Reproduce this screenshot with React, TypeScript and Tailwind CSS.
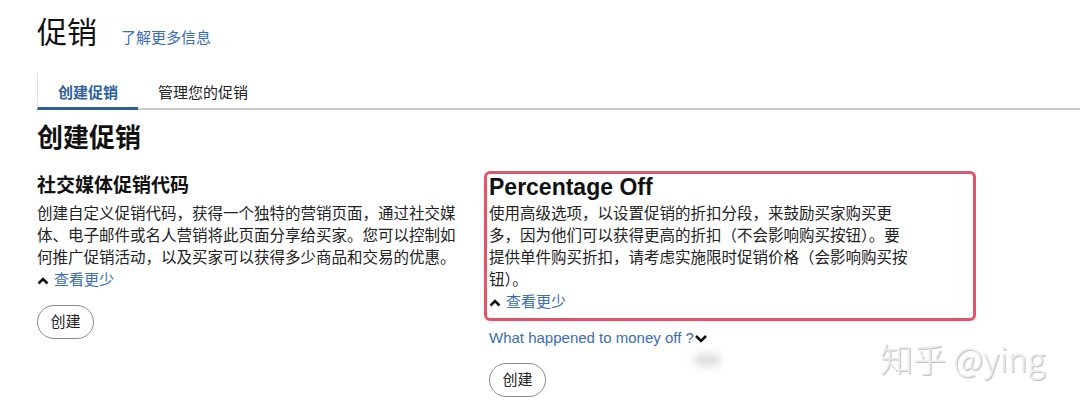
const Up = () => (
  <svg width="12" height="9" viewBox="0 0 12 9" className="shrink-0">
    <polyline points="1.5,7.5 6,3 10.5,7.5" fill="none" stroke="#111" strokeWidth="2.6" />
  </svg>
);

const Down = () => (
  <svg width="14" height="9" viewBox="0 0 14 9" className="shrink-0">
    <polyline points="2,2 7,7 12,2" fill="none" stroke="#111" strokeWidth="2.6" />
  </svg>
);

const ShowLess = () => (
  <div className="flex h-[22px] items-center gap-[5px]">
    <Up />
    <span className="text-[15px] text-[#3b6db3]">查看更少</span>
  </div>
);

const CreateButton = () => (
  <button className="flex h-[34px] w-[57px] items-center justify-center rounded-full border border-[#8a8a8a] bg-white text-[15px] text-[#222]">
    创建
  </button>
);

const App = () => {
  const left = [
    '创建自定义促销代码，获得一个独特的营销页面，通过社交媒',
    '体、电子邮件或名人营销将此页面分享给买家。您可以控制如',
    '何推广促销活动，以及买家可以获得多少商品和交易的优惠。',
  ];
  const right = [
    '使用高级选项，以设置促销的折扣分段，来鼓励买家购买更',
    '多，因为他们可以获得更高的折扣（不会影响购买按钮）。要',
    '提供单件购买折扣，请考虑实施限时促销价格（会影响购买按',
    '钮）。',
  ];

  return (
    <div
      className="relative h-[408px] w-[1080px] overflow-hidden bg-white pl-[37px] text-[#111]"
      style={{ fontFamily: '"Liberation Sans", "Noto Sans CJK SC", sans-serif' }}
    >
      <header className="mt-[15px] flex h-[36px] items-baseline">
        <h1 className="text-[30px] leading-[36px] font-normal">促销</h1>
        <a className="ml-[24px] text-[15px] text-[#3b6db3]">了解更多信息</a>
      </header>

      <nav className="mt-[22px] flex border-b-2 border-[#c9c9c9]">
        <div className="-mb-[2px] box-border flex h-[37px] items-center border-b-[3px] border-l border-[#2d5f9f] border-l-[#e2e2e2] px-[20px] pt-[6px] text-[15px] font-bold text-[#2d5f9f]">
          创建促销
        </div>
        <div className="-mb-[2px] box-border flex h-[37px] items-center border-b-[3px] border-transparent px-[20px] pt-[6px] text-[15px] text-[#222]">
          管理您的促销
        </div>
      </nav>

      <h2 className="mt-[12px] text-[26px] leading-[32px] font-bold">创建促销</h2>

      <div className="mt-[17px] flex">
        <section className="w-[447px] pt-[2px]">
          <h3 className="text-[19px] leading-[26px] font-bold">社交媒体促销代码</h3>
          <p className="mt-[4px] text-[15.5px] leading-[22px] text-[#222]">
            {left.map((l) => (
              <span key={l} className="block whitespace-nowrap">{l}</span>
            ))}
          </p>
          <ShowLess />
          <div className="mt-[14px]">
            <CreateButton />
          </div>
        </section>

        <section className="w-[492px]">
          <div className="rounded-[6px] border-[3px] border-[#e25468] pb-[5px] pl-[2px]">
            <h3 className="text-[23px] leading-[26px] font-bold">Percentage Off</h3>
            <p className="mt-[3px] text-[15.5px] leading-[22px] text-[#222]">
              {right.map((l) => (
                <span key={l} className="block whitespace-nowrap">{l}</span>
              ))}
            </p>
            <ShowLess />
          </div>
          <div className="mt-[6px] flex h-[22px] items-center pl-[5px]">
            <span className="text-[15px] text-[#3b6db3]">What happened to money off ?</span>
            <Down />
          </div>
          <div className="mt-[14px] pl-[5px]">
            <CreateButton />
          </div>
        </section>
      </div>

      <div className="absolute left-[694px] top-[354px] h-[12px] w-[26px] rounded-full bg-[#c4c4c4] opacity-60 blur-[4px]" />
      <div
        className="absolute left-[880px] top-[336px] text-[33px] leading-[44px] font-light text-[#ececec] [text-shadow:1px_1px_0_#c2c2c2]"
        style={{ fontFamily: '"Noto Sans CJK SC", "Noto Sans", sans-serif' }}
      >
        知乎 @ying
      </div>
    </div>
  );
};

export default App;
